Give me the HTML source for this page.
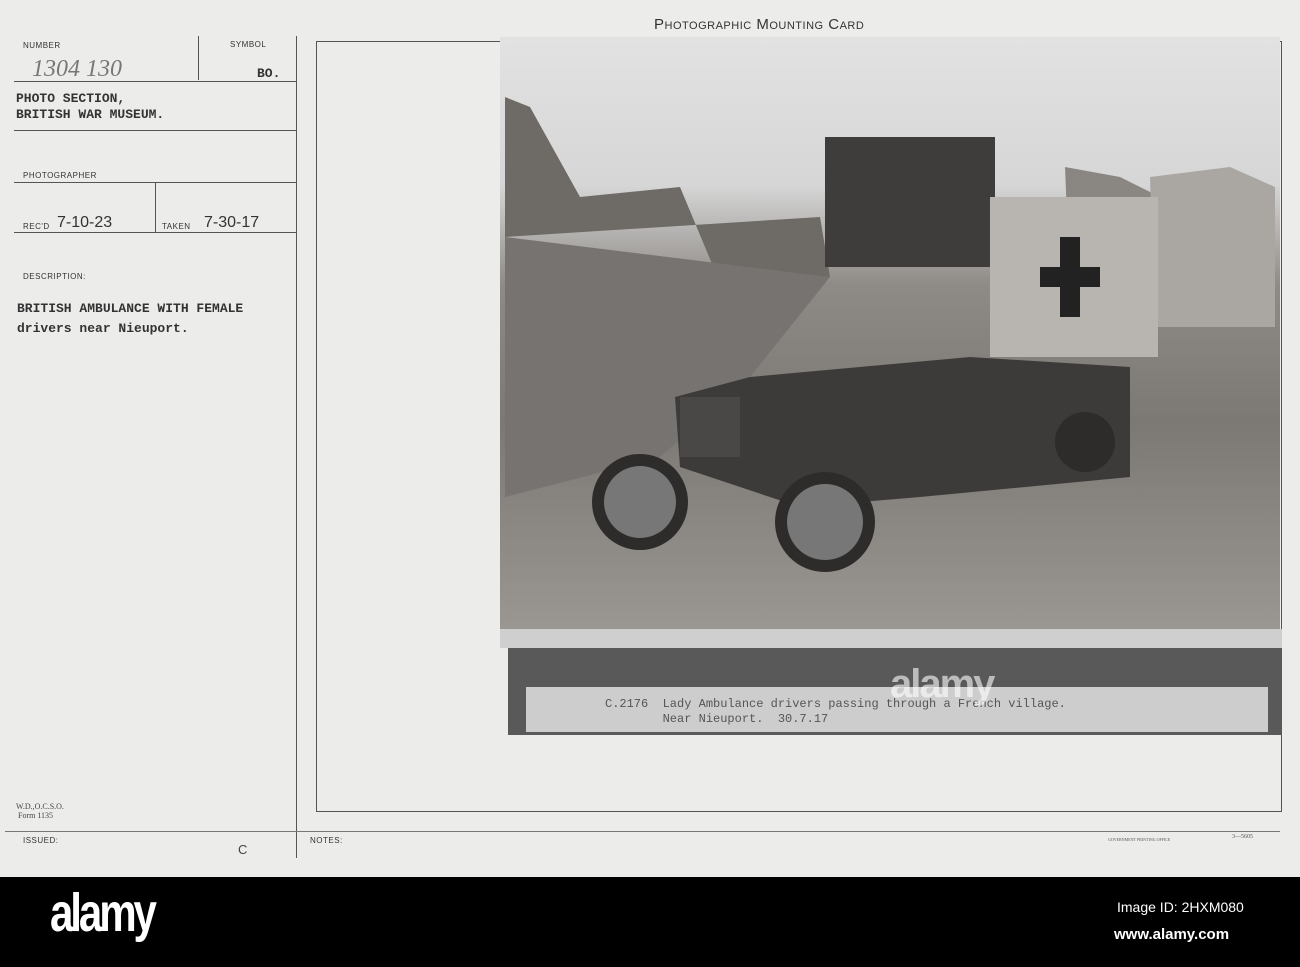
<!DOCTYPE html>
<html><head><meta charset="utf-8"><style>
body{margin:0;width:1300px;height:967px;overflow:hidden;background:#000;font-family:"Liberation Mono",monospace;}
#card{position:absolute;left:0;top:0;width:1300px;height:877px;background:#ececea;}
.l{position:absolute;background:#555;}
.s{position:absolute;font-family:"Liberation Sans",sans-serif;font-size:8px;color:#333;letter-spacing:0.5px;}
.t{position:absolute;font-size:13px;color:#333;font-weight:bold;white-space:nowrap;}
</style></head><body>
<div id="card">
<div class="l" style="left:296px;top:36px;width:1px;height:822px"></div>
<div class="l" style="left:198px;top:36px;width:1px;height:44px"></div>
<div class="l" style="left:14px;top:81px;width:282px;height:1px"></div>
<div class="l" style="left:14px;top:130px;width:282px;height:1px"></div>
<div class="l" style="left:14px;top:182px;width:282px;height:1px"></div>
<div class="l" style="left:155px;top:183px;width:1px;height:50px"></div>
<div class="l" style="left:14px;top:232px;width:282px;height:1px"></div>
<div class="l" style="left:5px;top:831px;width:1275px;height:1px;background:#777"></div>
<div class="s" style="left:23px;top:41px">NUMBER</div>
<div class="s" style="left:230px;top:40px">SYMBOL</div>
<div style="position:absolute;left:32px;top:56px;font-family:'Liberation Serif',serif;font-style:italic;font-size:24px;color:#777;">1304 130</div>
<div class="t" style="left:257px;top:66px">BO.</div>
<div class="t" style="left:16px;top:91px;line-height:16px">PHOTO SECTION,<br>BRITISH WAR MUSEUM.</div>
<div class="s" style="left:23px;top:171px">PHOTOGRAPHER</div>
<div class="s" style="left:23px;top:222px">REC'D</div>
<div style="position:absolute;left:57px;top:214px;font-family:'Liberation Sans';font-size:16px;color:#333">7-10-23</div>
<div class="s" style="left:162px;top:222px">TAKEN</div>
<div style="position:absolute;left:204px;top:214px;font-family:'Liberation Sans';font-size:16px;color:#333">7-30-17</div>
<div class="s" style="left:23px;top:272px">DESCRIPTION:</div>
<div class="t" style="left:17px;top:299px;line-height:20px">BRITISH AMBULANCE WITH FEMALE<br>drivers near Nieuport.</div>
<div style="position:absolute;left:16px;top:802px;font-family:'Liberation Serif';font-size:8px;color:#444;line-height:9px">W.D.,O.C.S.O.<br>&nbsp;Form 1135</div>
<div class="s" style="left:23px;top:836px">ISSUED:</div>
<div style="position:absolute;left:238px;top:842px;font-family:'Liberation Sans';font-size:13px;color:#444">C</div>
<div class="s" style="left:310px;top:836px">NOTES:</div>
<div style="position:absolute;left:654px;top:16px;font-family:'Liberation Sans';font-size:15px;color:#333;letter-spacing:0.5px;font-variant:small-caps">Photographic Mounting Card</div>
<div style="position:absolute;left:316px;top:41px;width:966px;height:771px;border:1px solid #555;box-sizing:border-box"></div>
<div style="position:absolute;left:500px;top:37px;width:780px;height:592px;background:linear-gradient(#e2e2e2 0,#d6d6d6 25%,#8e8a86 42%,#7c7874 65%,#9a9692 100%)"></div>
<svg style="position:absolute;left:500px;top:37px" width="780" height="592">
<polygon points="5,60 30,70 80,160 180,150 230,270 330,240 320,180 5,200" fill="#6e6a66"/>
<polygon points="5,200 330,240 250,340 160,420 5,460" fill="#777370"/>
<polygon points="565,130 620,140 660,160 660,240 570,250" fill="#8a8682"/>
<polygon points="650,140 730,130 775,150 775,290 655,290" fill="#aaa6a2"/>
<rect x="325" y="100" width="170" height="130" fill="#3f3d3b"/>
<rect x="490" y="160" width="168" height="160" fill="#b8b4b0"/>
<rect x="560" y="200" width="20" height="80" fill="#222"/><rect x="540" y="230" width="60" height="20" fill="#222"/>
<polygon points="175,360 250,340 470,320 630,330 630,440 420,460 300,470 180,430" fill="#3d3b39"/>
<circle cx="140" cy="465" r="48" fill="#2e2c2a"/><circle cx="140" cy="465" r="36" fill="#777"/>
<circle cx="325" cy="485" r="50" fill="#2e2c2a"/><circle cx="325" cy="485" r="38" fill="#777"/>
<circle cx="585" cy="405" r="30" fill="#2e2c2a"/>
<rect x="180" y="360" width="60" height="60" fill="#4a4846"/>
</svg>
<div style="position:absolute;left:500px;top:629px;width:782px;height:19px;background:#cfcfcf"></div>
<div style="position:absolute;left:508px;top:648px;width:774px;height:87px;background:#595959"></div>
<div style="position:absolute;left:526px;top:687px;width:742px;height:45px;background:#cdcdcd"></div>
<div style="position:absolute;left:605px;top:697px;font-size:12px;color:#555;line-height:15px;white-space:pre">C.2176  Lady Ambulance drivers passing through a French village.
        Near Nieuport.  30.7.17</div>
<div style="position:absolute;left:890px;top:662px;font-family:'Liberation Sans';font-weight:bold;font-size:40px;color:rgba(255,255,255,0.6);letter-spacing:-2px">alamy</div>
<div style="position:absolute;left:1108px;top:837px;font-family:'Liberation Serif';font-size:4px;color:#555">GOVERNMENT PRINTING OFFICE</div>
<div style="position:absolute;left:1232px;top:834px;font-family:'Liberation Serif';font-size:6px;color:#555">3—5605</div>
</div>
<div style="position:absolute;left:50px;top:882px;font-family:'Liberation Sans';font-weight:bold;font-size:54px;color:#fff;letter-spacing:-4px;transform:scaleX(0.78);transform-origin:left">alamy</div>
<div style="position:absolute;left:1117px;top:899px;font-family:'Liberation Sans';font-size:14px;color:#fff;">Image ID: 2HXM080</div>
<div style="position:absolute;left:1114px;top:926px;font-family:'Liberation Sans';font-weight:bold;font-size:15px;color:#fff;">www.alamy.com</div>
</body></html>
